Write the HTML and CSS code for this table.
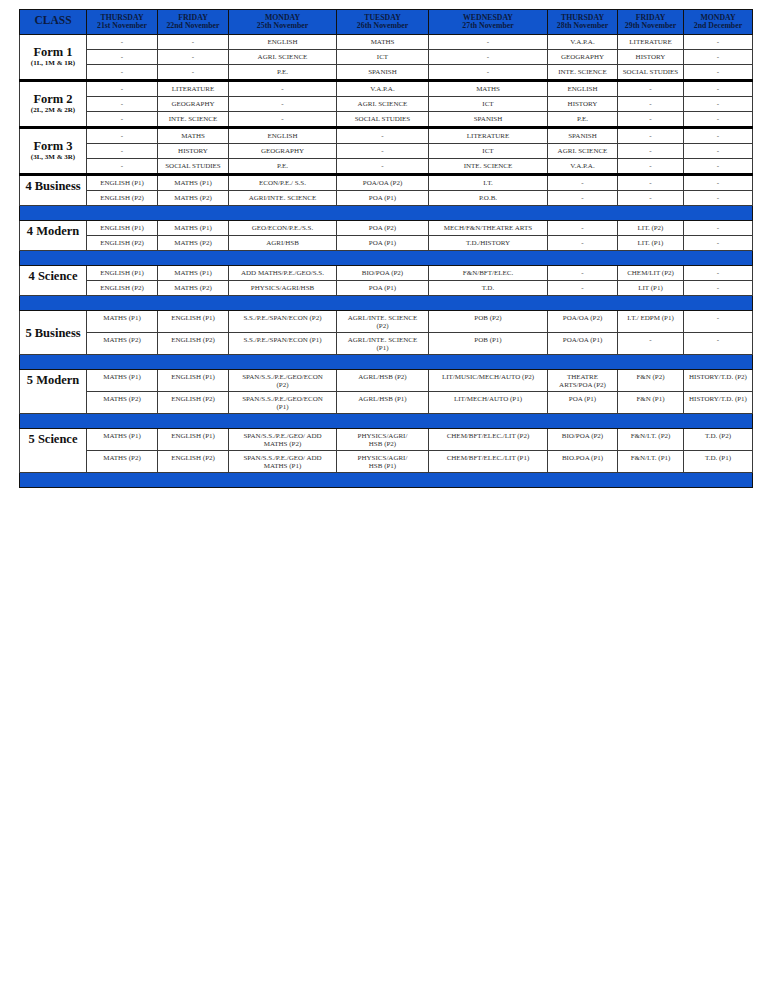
FILE: index.html
```html
<!DOCTYPE html>
<html>
<head>
<meta charset="utf-8">
<link rel="stylesheet" href="styles.css">
</head>
<body>
<table class="tt">
<colgroup>
<col class="c0"><col class="c1"><col class="c2"><col class="c3"><col class="c4"><col class="c5"><col class="c6"><col class="c7"><col class="c8">
</colgroup>
<thead>
<tr class="hd">
<th class="cls">CLASS</th>
<th>THURSDAY<br>21st November</th>
<th>FRIDAY<br>22nd November</th>
<th>MONDAY<br>25th November</th>
<th>TUESDAY<br>26th November</th>
<th>WEDNESDAY<br>27th November</th>
<th>THURSDAY<br>28th November</th>
<th>FRIDAY<br>29th November</th>
<th>MONDAY<br>2nd December</th>
</tr>
</thead>
<tbody>
<tr>
<td class="lab mid" rowspan="3"><div class="big">Form 1</div><div class="sub">(1L, 1M &amp; 1R)</div></td>
<td>-</td><td>-</td><td>ENGLISH</td><td>MATHS</td><td>-</td><td>V.A.P.A.</td><td>LITERATURE</td><td>-</td>
</tr>
<tr><td>-</td><td>-</td><td>AGRI. SCIENCE</td><td>ICT</td><td>-</td><td>GEOGRAPHY</td><td>HISTORY</td><td>-</td></tr>
<tr><td>-</td><td>-</td><td>P.E.</td><td>SPANISH</td><td>-</td><td>INTE. SCIENCE</td><td>SOCIAL STUDIES</td><td>-</td></tr>

<tr class="thick">
<td class="lab mid" rowspan="3"><div class="big">Form 2</div><div class="sub">(2L, 2M &amp; 2R)</div></td>
<td>-</td><td>LITERATURE</td><td>-</td><td>V.A.P.A.</td><td>MATHS</td><td>ENGLISH</td><td>-</td><td>-</td>
</tr>
<tr><td>-</td><td>GEOGRAPHY</td><td>-</td><td>AGRI. SCIENCE</td><td>ICT</td><td>HISTORY</td><td>-</td><td>-</td></tr>
<tr><td>-</td><td>INTE. SCIENCE</td><td>-</td><td>SOCIAL STUDIES</td><td>SPANISH</td><td>P.E.</td><td>-</td><td>-</td></tr>

<tr class="thick">
<td class="lab mid" rowspan="3"><div class="big">Form 3</div><div class="sub">(3L, 3M &amp; 3R)</div></td>
<td>-</td><td>MATHS</td><td>ENGLISH</td><td>-</td><td>LITERATURE</td><td>SPANISH</td><td>-</td><td>-</td>
</tr>
<tr><td>-</td><td>HISTORY</td><td>GEOGRAPHY</td><td>-</td><td>ICT</td><td>AGRI. SCIENCE</td><td>-</td><td>-</td></tr>
<tr><td>-</td><td>SOCIAL STUDIES</td><td>P.E.</td><td>-</td><td>INTE. SCIENCE</td><td>V.A.P.A.</td><td>-</td><td>-</td></tr>

<tr class="thick">
<td class="lab top" rowspan="2"><div class="big">4 Business</div></td>
<td>ENGLISH (P1)</td><td>MATHS (P1)</td><td>ECON/P.E./ S.S.</td><td>POA/OA (P2)</td><td>I.T.</td><td>-</td><td>-</td><td>-</td>
</tr>
<tr><td>ENGLISH (P2)</td><td>MATHS (P2)</td><td>AGRI/INTE. SCIENCE</td><td>POA (P1)</td><td>P.O.B.</td><td>-</td><td>-</td><td>-</td></tr>
<tr class="band"><td colspan="9"></td></tr>

<tr>
<td class="lab top" rowspan="2"><div class="big">4 Modern</div></td>
<td>ENGLISH (P1)</td><td>MATHS (P1)</td><td>GEO/ECON/P.E./S.S.</td><td>POA (P2)</td><td>MECH/F&amp;N/THEATRE ARTS</td><td>-</td><td>LIT. (P2)</td><td>-</td>
</tr>
<tr><td>ENGLISH (P2)</td><td>MATHS (P2)</td><td>AGRI/HSB</td><td>POA (P1)</td><td>T.D./HISTORY</td><td>-</td><td>LIT. (P1)</td><td>-</td></tr>
<tr class="band"><td colspan="9"></td></tr>

<tr>
<td class="lab top" rowspan="2"><div class="big">4 Science</div></td>
<td>ENGLISH (P1)</td><td>MATHS (P1)</td><td>ADD MATHS/P.E./GEO/S.S.</td><td>BIO/POA (P2)</td><td>F&amp;N/BFT/ELEC.</td><td>-</td><td>CHEM/LIT (P2)</td><td>-</td>
</tr>
<tr><td>ENGLISH (P2)</td><td>MATHS (P2)</td><td>PHYSICS/AGRI/HSB</td><td>POA (P1)</td><td>T.D.</td><td>-</td><td>LIT (P1)</td><td>-</td></tr>
<tr class="band"><td colspan="9"></td></tr>

<tr class="two">
<td class="lab mid" rowspan="2"><div class="big">5 Business</div></td>
<td>MATHS (P1)</td><td>ENGLISH (P1)</td><td>S.S./P.E./SPAN/ECON (P2)</td><td>AGRL/INTE. SCIENCE<br>(P2)</td><td>POB (P2)</td><td>POA/OA (P2)</td><td>I.T./ EDPM (P1)</td><td>-</td>
</tr>
<tr class="two"><td>MATHS (P2)</td><td>ENGLISH (P2)</td><td>S.S./P.E./SPAN/ECON (P1)</td><td>AGRL/INTE. SCIENCE<br>(P1)</td><td>POB (P1)</td><td>POA/OA (P1)</td><td>-</td><td>-</td></tr>
<tr class="band"><td colspan="9"></td></tr>

<tr class="two">
<td class="lab top" rowspan="2"><div class="big">5 Modern</div></td>
<td>MATHS (P1)</td><td>ENGLISH (P1)</td><td>SPAN/S.S./P.E./GEO/ECON<br>(P2)</td><td>AGRL/HSB (P2)</td><td>LIT/MUSIC/MECH/AUTO (P2)</td><td>THEATRE<br>ARTS/POA (P2)</td><td>F&amp;N (P2)</td><td>HISTORY/T.D. (P2)</td>
</tr>
<tr class="two"><td>MATHS (P2)</td><td>ENGLISH (P2)</td><td>SPAN/S.S./P.E./GEO/ECON<br>(P1)</td><td>AGRL/HSB (P1)</td><td>LIT/MECH/AUTO (P1)</td><td>POA (P1)</td><td>F&amp;N (P1)</td><td>HISTORY/T.D. (P1)</td></tr>
<tr class="band"><td colspan="9"></td></tr>

<tr class="two">
<td class="lab top" rowspan="2"><div class="big">5 Science</div></td>
<td>MATHS (P1)</td><td>ENGLISH (P1)</td><td>SPAN/S.S./P.E./GEO/ ADD<br>MATHS (P2)</td><td>PHYSICS/AGRI/<br>HSB (P2)</td><td>CHEM/BFT/ELEC./LIT (P2)</td><td>BIO/POA (P2)</td><td>F&amp;N/I.T. (P2)</td><td>T.D. (P2)</td>
</tr>
<tr class="two"><td>MATHS (P2)</td><td>ENGLISH (P2)</td><td>SPAN/S.S./P.E./GEO/ ADD<br>MATHS (P1)</td><td>PHYSICS/AGRI/<br>HSB (P1)</td><td>CHEM/BFT/ELEC./LIT (P1)</td><td>BIO.POA (P1)</td><td>F&amp;N/I.T. (P1)</td><td>T.D. (P1)</td></tr>
<tr class="band"><td colspan="9"></td></tr>
</tbody>
</table>
</body>
</html>
```
FILE: styles.css
```css
html, body {
  margin: 0;
  padding: 0;
  background: #ffffff;
}
body {
  padding: 9px 0 0 19px;
  font-family: "Liberation Serif", "Times New Roman", serif;
}
.tt {
  border-collapse: collapse;
  table-layout: fixed;
  width: 733px;
  border: 1px solid #111;
}
.c0 { width: 67px; }
.c1 { width: 71px; }
.c2 { width: 71px; }
.c3 { width: 108px; }
.c4 { width: 92px; }
.c5 { width: 119px; }
.c6 { width: 70px; }
.c7 { width: 66px; }
.c8 { width: 69px; }

.hd th {
  background: #1155cc;
  color: #0c1a3d;
  font-weight: bold;
  font-size: 7.8px;
  line-height: 7.5px;
  height: 19px;
  padding: 0 2px 1px;
  border: 1px solid #111;
  text-align: center;
  vertical-align: middle;
}
.hd th.cls {
  font-size: 11.5px;
  line-height: 12px;
  padding-bottom: 5px;
}
td {
  border: 1px solid #3a3a3a;
  font-size: 7px;
  line-height: 8px;
  color: #333333;
  text-align: center;
  vertical-align: top;
  padding: 3px 4px 3px;
  height: 8px;
  white-space: nowrap;
  overflow: hidden;
}
tr.two td {
  padding-bottom: 2px;
}
td.lab {
  color: #111;
  padding: 3px 2px;
}
td.lab.mid { vertical-align: middle; }
td.lab.top { vertical-align: top; padding-top: 4px; }
.big {
  font-weight: bold;
  font-size: 12.5px;
  line-height: 13px;
}
.sub {
  font-weight: bold;
  font-size: 7px;
  line-height: 9px;
}
tr.thick td {
  border-top: 3px solid #000;
}
tr.band td {
  background: #1155cc;
  border: 1px solid #111;
  height: 14px;
  padding: 0;
}
```
